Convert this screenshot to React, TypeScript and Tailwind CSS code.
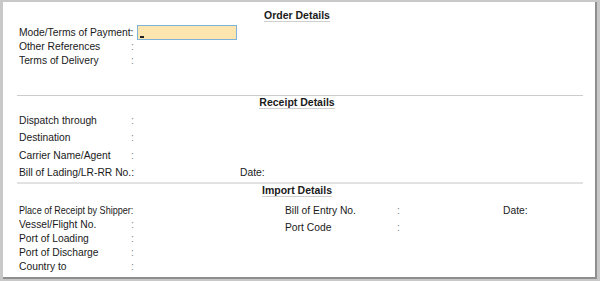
import React from "react";

function Heading({ children }: { children: React.ReactNode }) {
  return (
    <div className="flex justify-center pr-[4px]">
      <span className="font-bold text-[10.5px] leading-[12px] text-[#1a1a1a] border-b border-[#cfcfcf] whitespace-nowrap">
        {children}
      </span>
    </div>
  );
}

function Colon() {
  return <span className="text-[#858585]">:</span>;
}

export default function App() {
  return (
    <div className="w-[600px] h-[281px] bg-[#c8c8c8] pl-[3px] pt-[2px] font-['Liberation_Sans',Arial,sans-serif] text-[10.3px] text-[#1a1a1a] overflow-hidden">
      <div className="w-[594px] h-[277px] bg-white border-r-2 border-b-2 border-[#8e8e8e] flex flex-col">
        {/* Order Details */}
        <div className="mt-[7px]">
          <Heading>Order Details</Heading>
        </div>
        <div className="mt-[3px] pl-[16px] flex flex-col whitespace-nowrap">
          <div className="h-[15px] leading-[15px] flex">
            <span className="w-[118px]">Mode/Terms of Payment:</span>
            <div className="w-[100px] h-[15px] border border-[#7fb3d5] bg-[#fde5b0] flex items-end pl-[2px] pb-[1px]">
              <span className="block w-[4px] h-[2px] bg-[#222]" />
            </div>
          </div>
          <div className="h-[14px] leading-[14px] flex">
            <span className="w-[112px]">Other References</span>
            <Colon />
          </div>
          <div className="h-[14px] leading-[14px] flex">
            <span className="w-[112px]">Terms of Delivery</span>
            <Colon />
          </div>
        </div>
        <div className="mt-[27px] ml-[14px] w-[566px] h-px bg-[#cccccc]" />

        {/* Receipt Details */}
        <Heading>Receipt Details</Heading>
        <div className="mt-[3px] pl-[16px] flex flex-col whitespace-nowrap">
          <div className="h-[17.3px] leading-[17.3px] flex">
            <span className="w-[112px]">Dispatch through</span>
            <Colon />
          </div>
          <div className="h-[17.3px] leading-[17.3px] flex">
            <span className="w-[112px]">Destination</span>
            <Colon />
          </div>
          <div className="h-[17.3px] leading-[17.3px] flex">
            <span className="w-[112px]">Carrier Name/Agent</span>
            <Colon />
          </div>
          <div className="h-[17.3px] leading-[17.3px] flex">
            <span className="w-[221px]">Bill of Lading/LR-RR No.:</span>
            <span>Date:</span>
          </div>
        </div>
        <div className="mt-[1px] ml-[14px] w-[566px] h-[2px] bg-[#e2e2e2]" />

        {/* Import Details */}
        <Heading>Import Details</Heading>
        <div className="mt-[7px] flex whitespace-nowrap">
          <div className="ml-[16px] w-[266px] flex flex-col">
            <div className="h-[14px] leading-[14px] flex">
              <span className="inline-block origin-left scale-x-[0.88]">Place of Receipt by Shipper:</span>
            </div>
            <div className="h-[14px] leading-[14px] flex">
              <span className="w-[112px]">Vessel/Flight No.</span>
              <Colon />
            </div>
            <div className="h-[14px] leading-[14px] flex">
              <span className="w-[112px]">Port of Loading</span>
              <Colon />
            </div>
            <div className="h-[14px] leading-[14px] flex">
              <span className="w-[112px]">Port of Discharge</span>
              <Colon />
            </div>
            <div className="h-[14px] leading-[14px] flex">
              <span className="w-[112px]">Country to</span>
              <Colon />
            </div>
          </div>
          <div className="flex flex-col gap-[2.7px]">
            <div className="h-[14px] leading-[14px] flex">
              <span className="w-[112px]">Bill of Entry No.</span>
              <span className="w-[106px] text-[#858585]">:</span>
              <span>Date:</span>
            </div>
            <div className="h-[14px] leading-[14px] flex">
              <span className="w-[112px]">Port Code</span>
              <Colon />
            </div>
          </div>
        </div>
      </div>
    </div>
  );
}
